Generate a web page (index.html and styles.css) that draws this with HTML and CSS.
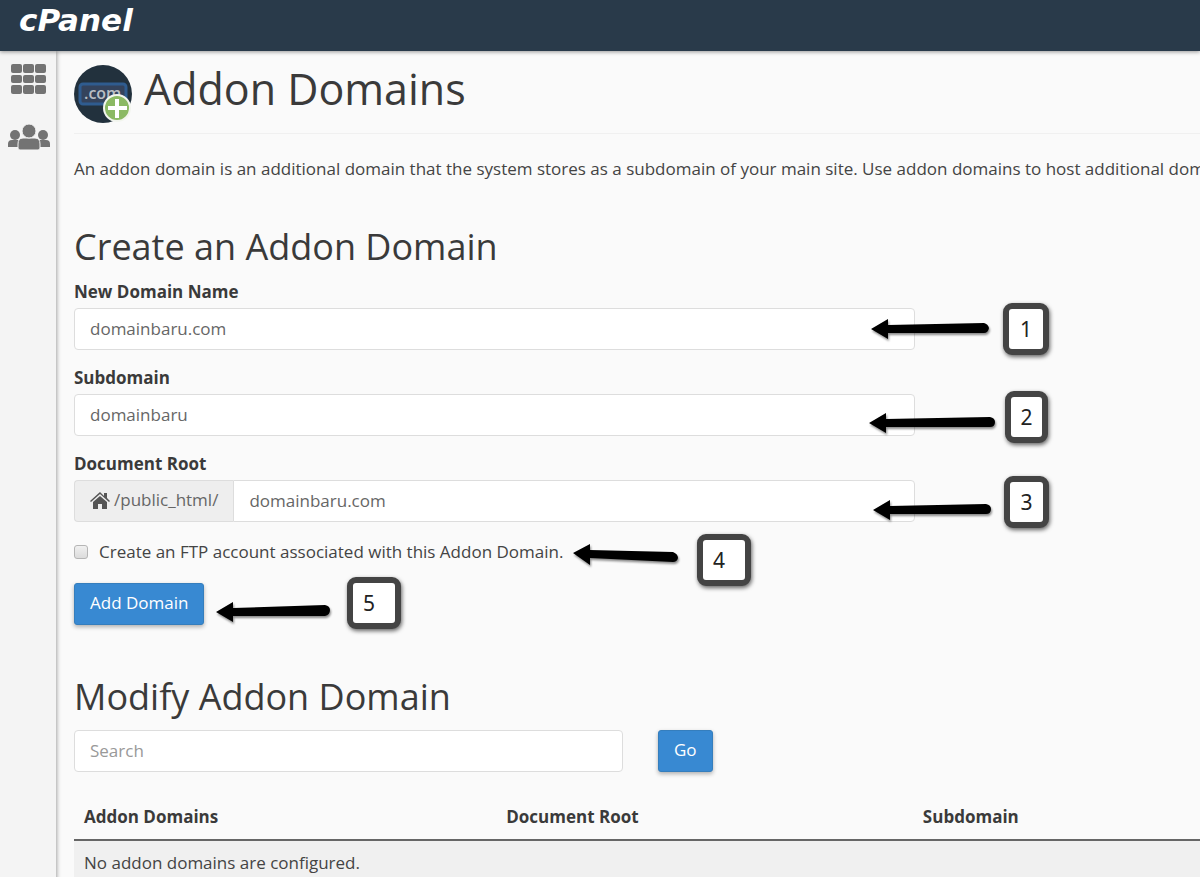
FILE: index.html
```html
<!DOCTYPE html>
<html lang="en">
<head>
    <meta charset="UTF-8">
    <meta name="viewport" content="width=device-width, initial-scale=1.0">
    <title>cPanel - Addon Domains</title>
    <link rel="stylesheet" href="styles.css">
</head>
<body>

    <header class="topbar">
        <a href="#" class="logo">cPanel</a>
    </header>

    <div class="layout">
        <nav class="sidebar">
            <a href="#" aria-label="Home">
                <svg width="36" height="30" viewBox="0 0 36 30" fill="#737373">
                    <rect x="0" y="0" width="11" height="9" rx="2"/>
                    <rect x="12" y="0" width="11" height="9" rx="2"/>
                    <rect x="24" y="0" width="11" height="9" rx="2"/>
                    <rect x="0" y="11" width="11" height="8" rx="2"/>
                    <rect x="12" y="11" width="11" height="8" rx="2"/>
                    <rect x="24" y="11" width="11" height="8" rx="2"/>
                    <rect x="0" y="21" width="11" height="9" rx="2"/>
                    <rect x="12" y="21" width="11" height="9" rx="2"/>
                    <rect x="24" y="21" width="11" height="9" rx="2"/>
                </svg>
            </a>
            <a href="#" aria-label="Users">
                <svg width="44" height="28" viewBox="0 0 44 28" fill="#737373">
                    <circle cx="8" cy="12" r="5"/>
                    <circle cx="36" cy="12" r="5"/>
                    <path d="M1 24v-3q0-4 4-4h7v7zM43 24v-3q0-4-4-4h-7v7z"/>
                    <path d="M11 25v-4q0-6 5-6h12q5 0 5 6v4q0 2-2 2H13q-2 0-2-2z" stroke="#f4f4f4" stroke-width="1"/>
                    <circle cx="22" cy="8" r="7" stroke="#f4f4f4" stroke-width="1"/>
                </svg>
            </a>
        </nav>

        <main class="content">
            <div class="page-title">
                <svg width="58" height="58" viewBox="0 0 58 58" aria-hidden="true">
                    <circle cx="29" cy="29" r="29" fill="#22313d"/>
                    <rect x="6" y="19" width="46" height="20" rx="3" fill="#34435c" stroke="#2f5c8f" stroke-width="3"/>
                    <text x="10" y="34" class="icon-text">.com</text>
                    <circle cx="43" cy="43" r="13" fill="#8bb963" stroke="#f2f5ee" stroke-width="2"/>
                    <path d="M43 34v19M34 43h19" stroke="#fff" stroke-width="4"/>
                </svg>
                <h1>Addon Domains</h1>
            </div>

            <p class="intro">An addon domain is an additional domain that the system stores as a subdomain of your main site. Use addon domains to host additional domains on your account.</p>

            <h2>Create an Addon Domain</h2>
            <form class="create-form">
                <div class="form-group">
                    <label for="domain">New Domain Name</label>
                    <input type="text" id="domain" class="form-control" value="domainbaru.com">
                    <svg class="arrow arrow-1" width="128" height="26" viewBox="0 0 128 26"><path d="M2 13L19 3V9L115 7Q119 8 120 12Q119 17 115 17L19 17V23Z"/></svg>
                    <span class="badge badge-1">1</span>
                </div>
                <div class="form-group">
                    <label for="subdomain">Subdomain</label>
                    <input type="text" id="subdomain" class="form-control" value="domainbaru">
                    <svg class="arrow arrow-2" width="136" height="26" viewBox="0 0 136 26"><path d="M2 13L19 3V9L123 7Q128 8 128 12Q128 17 123 17L19 17V23Z"/></svg>
                    <span class="badge badge-2">2</span>
                </div>
                <div class="form-group">
                    <label for="root">Document Root</label>
                    <div class="input-group">
                        <span class="addon">
                            <svg width="20" height="17" viewBox="0 0 20 17" fill="#555">
                                <path d="M0 9L10 0l4 4V1h3v5l3 3-1 1-9-8-9 8z"/>
                                <path d="M3 10l7-6 7 6v7h-5v-5H8v5H3z"/>
                            </svg>
                            /public_html/
                        </span>
                        <input type="text" id="root" class="form-control" value="domainbaru.com">
                    </div>
                    <svg class="arrow arrow-3" width="128" height="26" viewBox="0 0 128 26"><path d="M2 13L19 3V9L115 7Q120 8 120 12Q120 17 115 17L19 17V23Z"/></svg>
                    <span class="badge badge-3">3</span>
                </div>
                <div class="check-row">
                    <input type="checkbox" id="ftp">
                    <label for="ftp">Create an FTP account associated with this Addon Domain.</label>
                    <svg class="arrow arrow-4" width="114" height="26" viewBox="0 0 114 26"><path d="M2 10L19 1V7L102 9Q107 11 107 15Q106 19 102 19L19 15V22Z"/></svg>
                    <span class="badge badge-4">4</span>
                </div>
                <div class="button-row">
                    <button type="button" class="btn">Add Domain</button>
                    <svg class="arrow arrow-5" width="122" height="26" viewBox="0 0 122 26"><path d="M2 14L19 4V10L111 7Q116 8 116 12Q116 17 111 18L19 18V24Z"/></svg>
                    <span class="badge badge-5">5</span>
                </div>
            </form>

            <h2>Modify Addon Domain</h2>
            <form class="search-form">
                <input type="text" class="form-control" placeholder="Search" aria-label="Search">
                <button type="button" class="btn">Go</button>
            </form>

            <table class="domains">
                <thead>
                    <tr>
                        <th>Addon Domains</th>
                        <th>Document Root</th>
                        <th>Subdomain</th>
                    </tr>
                </thead>
                <tbody>
                    <tr>
                        <td colspan="3">No addon domains are configured.</td>
                    </tr>
                </tbody>
            </table>
        </main>
    </div>

</body>
</html>
```
FILE: styles.css
```css
* {
    box-sizing: border-box;
}
body {
    margin: 0;
    font-family: 'Open Sans', sans-serif;
    font-size: 17px;
    line-height: 24px;
    color: #444;
    background-color: #fafafa;
    overflow: hidden;
}
svg {
    display: block;
    flex: none;
}
.topbar {
    position: relative;
    height: 51px;
    padding-left: 19px;
    background-color: #293a4a;
    box-shadow: 0 1px 4px rgba(0,0,0,0.4);
}
.logo {
    font-family: 'DejaVu Sans', sans-serif;
    font-size: 31px;
    font-weight: bold;
    font-style: italic;
    line-height: 40px;
    color: #fff;
    text-decoration: none;
}
.layout {
    display: flex;
    min-height: calc(100vh - 51px);
}
.sidebar {
    flex: none;
    width: 56px;
    padding: 13px 0 0 2px;
    display: flex;
    flex-direction: column;
    align-items: center;
    gap: 29px;
    background-color: #f4f4f4;
    box-shadow: 1px 0 4px rgba(0,0,0,0.35);
}
.content {
    flex: 1;
    min-width: 0;
    padding: 14px 0 0 18px;
}
.page-title {
    display: flex;
    gap: 12px;
    padding-bottom: 10px;
    border-bottom: 1px solid #f0f0f0;
}
h1, h2 {
    margin: 0;
    font-weight: 400;
    color: #3a3a3a;
}
h1 {
    font-size: 43px;
    line-height: 48px;
}
h2 {
    font-size: 36px;
    line-height: 40px;
    margin-bottom: 13px;
}
.icon-text {
    font-size: 16px;
    font-weight: 600;
    fill: #b9bec4;
}
.intro {
    margin: 23px 0 46px;
    white-space: nowrap;
}
.create-form {
    max-width: 841px;
    margin-bottom: 52px;
}
.form-group {
    position: relative;
    margin-bottom: 16px;
}
.form-group label {
    display: block;
    margin-bottom: 4px;
    font-weight: 700;
    color: #3a3a3a;
}
.form-control {
    display: block;
    width: 100%;
    height: 42px;
    padding: 0 15px 2px;
    border: 1px solid #ddd;
    border-radius: 4px;
    background-color: #fff;
    font: inherit;
    color: #666;
}
.form-control::placeholder {
    color: #999;
}
.input-group {
    display: flex;
}
.addon {
    display: flex;
    align-items: center;
    gap: 4px;
    padding: 0 15px 2px;
    border: 1px solid #ddd;
    border-right: none;
    border-radius: 4px 0 0 4px;
    background-color: #eee;
    color: #666;
}
.input-group .form-control {
    flex: 1;
    border-radius: 0 4px 4px 0;
}
.check-row {
    position: relative;
    display: flex;
    align-items: center;
    gap: 11px;
    padding-top: 2px;
    margin-bottom: 19px;
}
.check-row input {
    appearance: none;
    width: 14px;
    height: 14px;
    margin: 0;
    border: 1px solid #b5b5b5;
    border-radius: 3px;
    background: linear-gradient(#f0f0f0, #dcdcdc);
}
.button-row {
    position: relative;
}
.btn {
    height: 42px;
    padding: 0 15px 2px;
    border: 1px solid #357ebd;
    border-radius: 3px;
    background-color: #3889d2;
    box-shadow: 0 2px 4px rgba(0,0,0,0.3);
    font: inherit;
    color: #fff;
}

/* Numbered steps on top of the form */
.arrow {
    position: absolute;
    filter: drop-shadow(1px 2px 1px rgba(0,0,0,0.45));
}
.badge {
    position: absolute;
    display: flex;
    align-items: center;
    justify-content: center;
    width: 46px;
    height: 52px;
    border: 6px solid #444;
    border-radius: 9px;
    background-color: #fff;
    background-clip: padding-box;
    box-shadow: 1px 2px 4px rgba(0,0,0,0.6);
    font-family: 'Noto Sans', sans-serif;
    font-size: 21px;
    color: #222;
}
.arrow-1 { left: 795px; top: 36px; }
.badge-1 { left: 929px; top: 23px; }
.arrow-2 { left: 793px; top: 44px; }
.badge-2 { left: 931px; top: 25px; width: 43px; }
.arrow-3 { left: 797px; top: 45px; }
.badge-3 { left: 930px; top: 24px; width: 45px; }
.arrow-4 { left: 497px; top: 5px; }
.badge-4 { left: 623px; top: -4px; width: 54px; padding-right: 10px; }
.arrow-5 { left: 140px; top: 15px; }
.badge-5 { left: 273px; top: -6px; width: 54px; padding-right: 10px; }

.search-form {
    display: flex;
    gap: 35px;
    margin-bottom: 24px;
}
.search-form .form-control {
    flex: 0 1 549px;
}
.domains {
    width: 100%;
    border-collapse: collapse;
    table-layout: fixed;
    text-align: left;
}
.domains th {
    padding: 9px 10px 10px;
    border-bottom: 2px solid #666;
    font-weight: 700;
    color: #3a3a3a;
}
.domains th:nth-child(1) {
    width: 37.5%;
}
.domains th:nth-child(2) {
    width: 37%;
}
.domains td {
    padding: 10px;
    background-color: #f0f0f0;
}
```
